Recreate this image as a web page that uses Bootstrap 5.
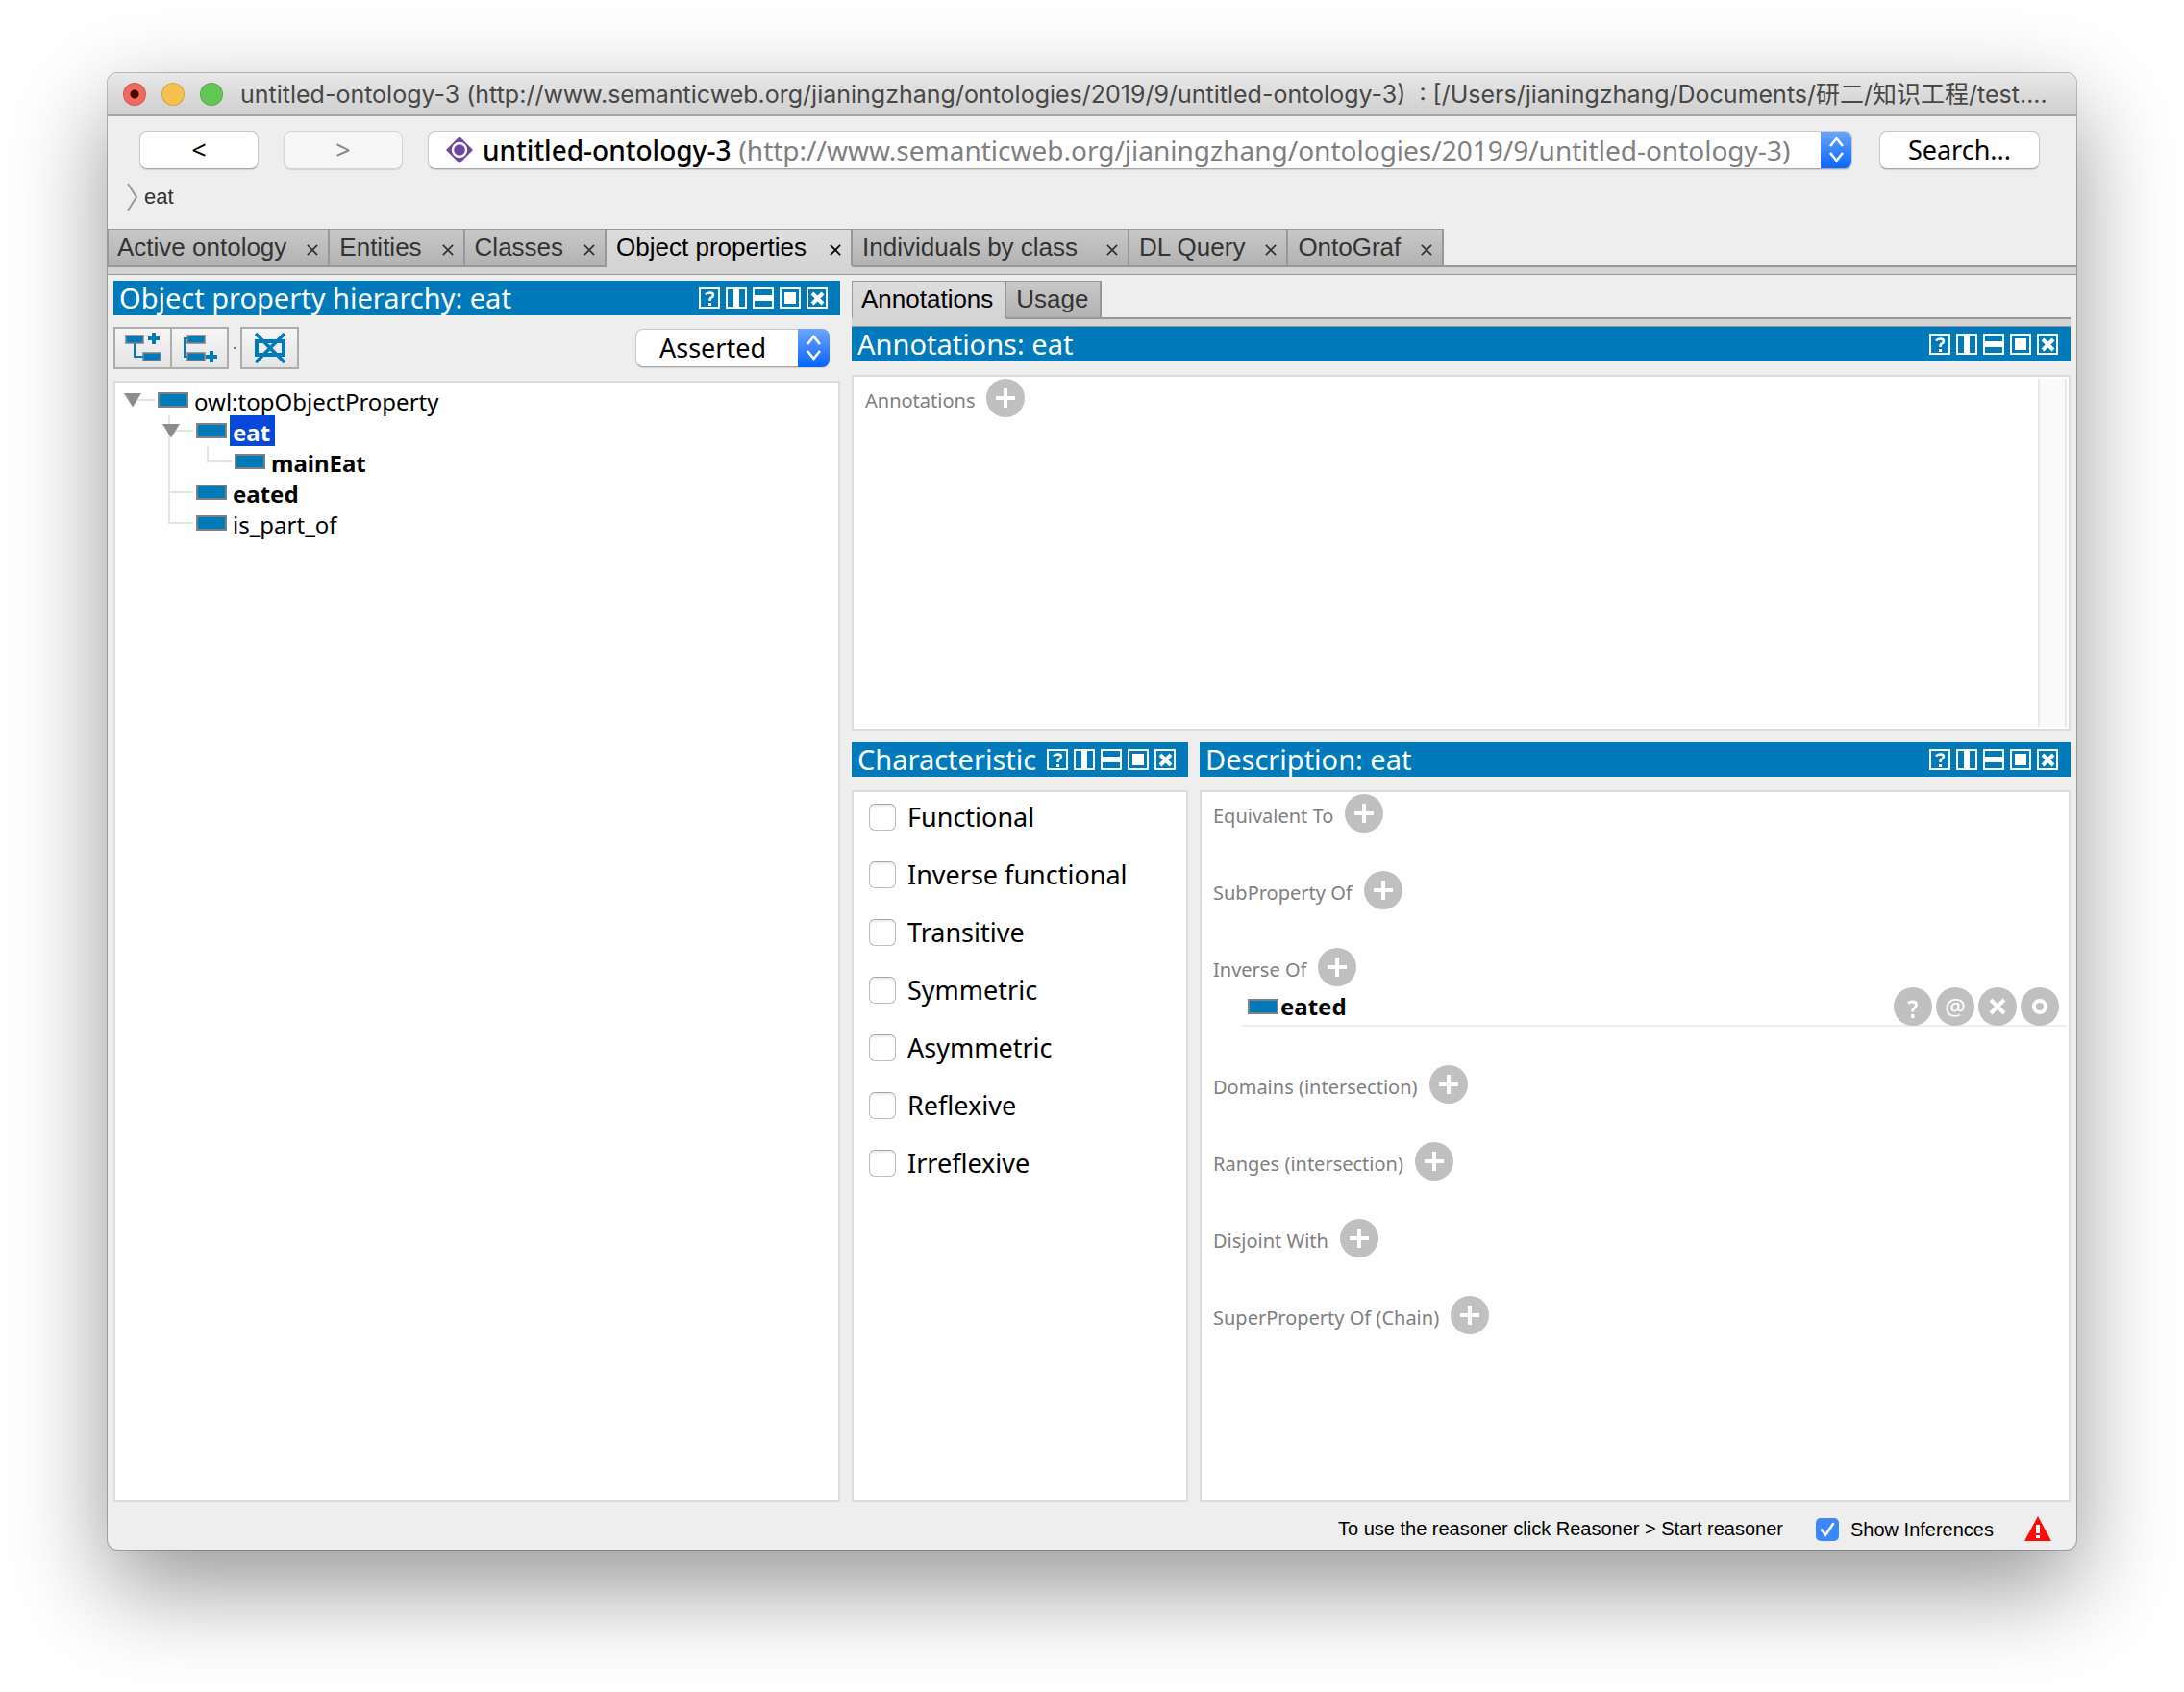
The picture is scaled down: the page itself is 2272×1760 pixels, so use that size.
<!DOCTYPE html>
<html lang="en">
<head>
<meta charset="utf-8">
<meta name="viewport" content="width=device-width, initial-scale=1">
<title>untitled-ontology-3</title>
<link href="https://cdn.jsdelivr.net/npm/bootstrap@5.3.0/dist/css/bootstrap.min.css" rel="stylesheet">
<style>
  :root { --blue: #007abb; --line: #dcdcdc; --edge: #989898; --face: #eeeeee; }
  body { min-height: 100vh; padding: 76px 112px 148px; background: #fff; color: #000;
    font-family: "Noto Sans", "Noto Sans CJK SC", sans-serif; font-size: 24px; line-height: 32px; }
  button, select { font-family: inherit; color: inherit; }
  svg { display: block; flex: none; }
  .helv { font-family: "Liberation Sans", sans-serif; }
  .app-window { min-height: calc(100vh - 224px); background: var(--face); border-radius: 10px;
    box-shadow: 0 0 0 1px rgba(0,0,0,.24), 0 38px 100px rgba(0,0,0,.42); }

  /* title bar */
  .titlebar { height: 45px; padding: 0 28px 0 16px; gap: 16px; border-radius: 10px 10px 0 0; border-bottom: 2px solid #a6a6a6;
    background: linear-gradient(#e8e8e8, #cfcfcf); }
  .light-btn { width: 24px; height: 24px; padding: 0; border-radius: 50%; border: 1px solid rgba(0,0,0,.14); }
  .light-red { background: radial-gradient(circle, #4a0500 0 4px, #ed6a5f 5px); }
  .light-amber { background: #f6c04f; }
  .light-green { background: #62c655; }
  .win-title { font-family: Inter, "Noto Sans CJK SC", sans-serif; font-size: 25px; font-weight: 400; line-height: 40px; color: #474747; margin: 0 0 0 2px; white-space: pre; }

  /* toolbar */
  .toolbar { padding: 15px 38px 0 33px; gap: 26px; }
  .mac-btn { height: 40px; padding: 0; font-size: 27px; line-height: 36px; background: #fff; border: 1px solid #c9c9c9; border-bottom-color: #a8a8a8;
    border-radius: 8px; box-shadow: 0 1px 1px rgba(0,0,0,.12); color: #000; }
  .mac-btn:disabled { background: #f6f6f6; color: #858585; border-color: #d4d4d4; opacity: 1; }
  .nav-btn { width: 124px; }
  .search-btn { width: 167px; margin-left: 2px; }
  .combo { overflow: hidden; padding-left: 18px; font-size: 28px; }
  .combo-arrow { width: 33px; align-self: stretch; margin: -1px; background: linear-gradient(#6ea6fb, #0564ff); border-radius: 0 8px 8px 0; }
  .combo b { font-weight: 500; margin-left: 10px; }
  .combo-url { color: #808080; margin-left: 8px; }
  .crumbs { padding: 15px 20px 19px; gap: 6px; font-size: 22px; line-height: 28px; color: #333; }
  .crumbs a { color: inherit; }

  /* tabs */
  .tab-strip { line-height: 37px; font-size: 26px; color: #333; }
  .tab-strip .fill { border-bottom: 2px solid var(--edge); }
  .tab-item { height: 40px; padding: 0 8px 0 10px; gap: 21px; border: 2px solid var(--edge); border-left-width: 0; border-top-width: 1px; background: linear-gradient(#c8c8c8, #b2b2b2); }
  .tab-item:first-child { border-left-width: 1px; padding-left: 9px; }
  .tab-item a { color: inherit; text-decoration: none; white-space: nowrap; }
  .tab-item.on { background: linear-gradient(#dddddd, #d4d4d4); color: #000; border-bottom-color: #d4d4d4; }
  .tab-item button { padding: 0; border: 0; background: none; width: 14px; }
  .tab-wide { min-width: 256px; }
  .tab-wider { min-width: 288px; }
  .tab-sub .tab-item { padding-right: 12px; }
  .tab-band { height: 8px; background: #d4d4d4; border-bottom: 1px solid var(--edge); }

  /* panes */
  .workspace { padding: 6px 6px 0; gap: 12px; }
  .pane-left { flex: 756 1 0; min-width: 0; }
  .pane-right { flex: 1268 1 0; min-width: 0; gap: 12px; }
  .pane-row { gap: 12px; }
  .pane-chars { flex: 350 1 0; min-width: 0; }
  .pane-desc { flex: 906 1 0; min-width: 0; }
  .pane-head { height: 36px; padding: 0 13px 0 6px; background: var(--blue); color: #fff; }
  .pane-head h2 { font-size: 29px; line-height: 36px; font-weight: 400; margin: 0; white-space: nowrap; }
  .head-tools { gap: 6px; }
  .head-tools button { padding: 0; border: 0; background: none; }
  .pane-body { background: #fff; border: 2px solid var(--line); }
  .pane-right .pane-body { margin-top: 14px; }
  .annot-body { height: 370px; }
  .scroll-track { width: 30px; margin: 2px 2px 2px 0; background: #fafafa; border: 2px solid #e9e9e9; border-width: 0 2px; }

  .tree-tools { padding: 12px 11px 12px 0; }
  .tool-btn { width: 61px; height: 44px; padding: 0; border: 2px solid #adadad; background: linear-gradient(#f6f6f6, #e4e4e4); display: grid; place-items: center; }
  .tool-btn + .tool-btn { margin-left: -2px; }
  .tool-dot { width: 2px; height: 2px; background: #777; margin: 0 5px; }
  .mode-box { width: 202px; position: relative; }
  .mode-box select { appearance: none; width: 100%; padding: 0 0 0 24px; outline: 0; }
  .mode-box .combo-arrow { position: absolute; top: 0; right: 0; bottom: 0; margin: 0; pointer-events: none; }

  .tree { margin: 0; padding: 2px 4px; list-style: none; }
  .tree li { height: 32px; }
  .tree .name { margin-left: 3px; padding: 2px 3px 0; height: 32px; }
  .tree .picked { background: #0648da; color: #fff; padding-right: 5px; }
  .prop { width: 32px; height: 16px; border: 2px solid #808080; background: var(--blue); flex: none; }
  .step { width: 40px; height: 32px; flex: none; }
  b.name, b.val { font-weight: 700; }

  .char-list { padding: 12px 16px; gap: 32px; }
  .char-list label { font-size: 27px; line-height: 28px; gap: 12px; }
  .tick { appearance: none; flex: none; margin: 0; width: 28px; height: 28px; border: 1px solid #bdbdbd; border-top-color: #a5a5a5; border-radius: 6px; background: #fff; box-shadow: inset 0 2px 2px rgba(0,0,0,.08); }

  .desc-list { padding: 2px 4px 2px 12px; gap: 40px; }
  .sect-row { gap: 12px; font-size: 20px; color: #808080; white-space: nowrap; }
  .sect-row span { padding-top: 6px; }
  .disc { width: 40px; height: 40px; padding: 0; border: 0; border-radius: 50%; background: #c0c0c0; color: #fff; display: grid; place-items: center; flex: none; }
  .axiom { height: 40px; margin: 2px -2px 0 30px; border-bottom: 2px solid #eeeeee; padding: 0 8px 0 6px; }
  .axiom .prop { margin-right: 2px; }
  .axiom-tools { gap: 4px; height: 40px; }

  .statusbar { height: 50px; padding: 6px 26px 0; font-size: 20px; line-height: 24px; }
  .statusbar label { gap: 12px; margin: 2px 32px 0 34px; }
  .tick-sm { width: 24px; height: 24px; border: 0; border-radius: 5px; appearance: none; margin: 0; }
  .tick-sm:checked { background: #3b87fd url("data:image/svg+xml,%3Csvg xmlns='http://www.w3.org/2000/svg' viewBox='0 0 24 24'%3E%3Cpath d='M6 12.5l4.200 5L18 6' fill='none' stroke='white' stroke-width='2.600' stroke-linecap='round'/%3E%3C/svg%3E"); }
</style>
<script src="https://cdn.jsdelivr.net/npm/bootstrap@5.3.0/dist/js/bootstrap.bundle.min.js" defer></script>
</head>
<body>
<svg width="0" height="0" class="position-absolute" aria-hidden="true">
  <symbol id="i-help" viewBox="0 0 22 22"><path d="M1 1h20v20H1z" fill="none" stroke="#fff" stroke-width="2"/><path d="M7 7.500Q8.500 5.500 11.500 5.500q3.500 0 3.500 2.500 0 1.500-2 2.500-1.500 1-1.500 2.500v1" fill="none" stroke="#fff" stroke-width="2.600"/><path d="M10 16h3v3h-3z" fill="#fff"/></symbol>
  <symbol id="i-vert" viewBox="0 0 22 22"><path d="M1 1h20v20H1z" fill="none" stroke="#fff" stroke-width="2"/><path d="M8 1h6v20H8z" fill="#fff"/></symbol>
  <symbol id="i-horz" viewBox="0 0 22 22"><path d="M1 1h20v20H1z" fill="none" stroke="#fff" stroke-width="2"/><path d="M1 8h20v6H1z" fill="#fff"/></symbol>
  <symbol id="i-full" viewBox="0 0 22 22"><path d="M1 1h20v20H1z" fill="none" stroke="#fff" stroke-width="2"/><path d="M5 5h12v12H5z" fill="#fff"/></symbol>
  <symbol id="i-shut" viewBox="0 0 22 22"><path d="M1 1h20v20H1z" fill="none" stroke="#fff" stroke-width="2"/><path d="M6 6l11 11M17 6L6 17" stroke="#fff" stroke-width="4"/></symbol>
  <symbol id="i-plus" viewBox="0 0 40 40"><path d="M20 10v20M10 20h20" stroke="#fff" stroke-width="4"/></symbol>
  <symbol id="i-updown" viewBox="0 0 33 40"><path d="M10 16l6.500-8 6.500 8M10 23l6.500 8 6.500-8" fill="none" stroke="#fff" stroke-width="2.600"/></symbol>
  <symbol id="i-cross" viewBox="0 0 14 14"><path d="M1 1l12 12M13 1L1 13" stroke="currentColor" stroke-width="2"/></symbol>
  <symbol id="t-tri" viewBox="0 0 40 32"><path d="M18 16h19" stroke="#e4e4e4" stroke-width="2"/><path d="M5 9h18l-9 14.500z" fill="#8c8c8c"/></symbol>
  <symbol id="t-bar" viewBox="0 0 40 32"><path d="M12 0v32" stroke="#e4e4e4" stroke-width="2"/></symbol>
  <symbol id="t-tee" viewBox="0 0 40 32"><path d="M12 0v32M12 16h25" stroke="#e4e4e4" stroke-width="2"/></symbol>
  <symbol id="t-end" viewBox="0 0 40 32"><path d="M12 0v16h25" fill="none" stroke="#e4e4e4" stroke-width="2"/></symbol>
</svg>

<main class="app-window d-flex flex-column">
  <header class="titlebar d-flex align-items-center">
    <button class="light-btn light-red flex-shrink-0" aria-label="Close"></button>
    <button class="light-btn light-amber flex-shrink-0" aria-label="Minimise"></button>
    <button class="light-btn light-green flex-shrink-0" aria-label="Zoom"></button>
    <h1 class="win-title">untitled-ontology-3 (http://www.semanticweb.org/jianingzhang/ontologies/2019/9/untitled-ontology-3)  : [/Users/jianingzhang/Documents/研二/知识工程/test....</h1>
  </header>

  <div class="toolbar d-flex align-items-center">
    <button class="mac-btn nav-btn" aria-label="Back">&lt;</button>
    <button class="mac-btn nav-btn" aria-label="Forward" disabled>&gt;</button>
    <button class="mac-btn combo flex-grow-1 d-flex align-items-center text-nowrap" aria-haspopup="listbox">
      <svg width="28" height="28" viewBox="0 0 28 28"><path d="M14 0l14 14-14 14L0 14z" fill="#6d46a3"/><circle cx="14" cy="14" r="7" fill="#6d46a3" stroke="#fff" stroke-width="2.400"/><circle cx="14" cy="14" r="4" fill="#6d46a3"/></svg>
      <b>untitled-ontology-3</b><span class="combo-url">(http://www.semanticweb.org/jianingzhang/ontologies/2019/9/untitled-ontology-3)</span>
      <span class="combo-arrow ms-auto"><svg width="33" height="40"><use href="#i-updown"/></svg></span>
    </button>
    <button class="mac-btn search-btn">Search...</button>
  </div>

  <nav class="crumbs helv d-flex align-items-center" aria-label="Breadcrumb">
    <svg width="12" height="28" viewBox="0 0 12 28"><path d="M1 0l9 14-9 14" fill="none" stroke="#999" stroke-width="2"/></svg>
    <a href="#" class="text-decoration-none">eat</a>
  </nav>

  <nav class="tab-strip helv d-flex" aria-label="Views">
    <div class="tab-item d-flex"><a href="#">Active ontology</a><button aria-label="Close tab"><svg width="12" height="12" class="mt-1"><use href="#i-cross"/></svg></button></div>
    <div class="tab-item d-flex"><a href="#">Entities</a><button aria-label="Close tab"><svg width="12" height="12" class="mt-1"><use href="#i-cross"/></svg></button></div>
    <div class="tab-item d-flex"><a href="#">Classes</a><button aria-label="Close tab"><svg width="12" height="12" class="mt-1"><use href="#i-cross"/></svg></button></div>
    <div class="tab-item tab-wide on d-flex justify-content-between"><a href="#" aria-current="page">Object properties</a><button aria-label="Close tab"><svg width="12" height="12" class="mt-1"><use href="#i-cross"/></svg></button></div>
    <div class="tab-item tab-wider d-flex justify-content-between"><a href="#">Individuals by class</a><button aria-label="Close tab"><svg width="12" height="12" class="mt-1"><use href="#i-cross"/></svg></button></div>
    <div class="tab-item d-flex"><a href="#">DL Query</a><button aria-label="Close tab"><svg width="12" height="12" class="mt-1"><use href="#i-cross"/></svg></button></div>
    <div class="tab-item d-flex"><a href="#">OntoGraf</a><button aria-label="Close tab"><svg width="12" height="12" class="mt-1"><use href="#i-cross"/></svg></button></div>
    <div class="fill flex-grow-1"></div>
  </nav>
  <div class="tab-band"></div>

  <div class="workspace d-flex flex-grow-1">
    <section class="pane-left d-flex flex-column">
      <div class="pane-head d-flex align-items-center justify-content-between">
        <h2>Object property hierarchy: eat</h2>
        <div class="head-tools d-flex">
          <button aria-label="Help"><svg width="22" height="22"><use href="#i-help"/></svg></button>
          <button aria-label="Split vertically"><svg width="22" height="22"><use href="#i-vert"/></svg></button>
          <button aria-label="Split horizontally"><svg width="22" height="22"><use href="#i-horz"/></svg></button>
          <button aria-label="Float"><svg width="22" height="22"><use href="#i-full"/></svg></button>
          <button aria-label="Close"><svg width="22" height="22"><use href="#i-shut"/></svg></button>
        </div>
      </div>
      <div class="tree-tools d-flex align-items-center">
        <button class="tool-btn" aria-label="Add sub property"><svg width="40" height="32" viewBox="0 0 40 32"><path d="M11 11v14h9" fill="none" stroke="#007abb" stroke-width="2"/><path d="M2 3h18v8H2zM20 21h18v8H20z" fill="#007abb" stroke="#808080" stroke-width="1.500"/><path d="M31 0v12M25 6h12" stroke="#007abb" stroke-width="4"/></svg></button>
        <button class="tool-btn" aria-label="Add sibling property"><svg width="40" height="32" viewBox="0 0 40 32"><path d="M8 6H4v19h4" fill="none" stroke="#007abb" stroke-width="2"/><path d="M7 3h18v8H7zM7 21h18v8H7z" fill="#007abb" stroke="#808080" stroke-width="1.500"/><path d="M32 19v12M26 25h12" stroke="#007abb" stroke-width="4"/></svg></button>
        <span class="tool-dot"></span>
        <button class="tool-btn" aria-label="Delete property"><svg width="36" height="34" viewBox="0 0 36 34"><path d="M4 10h28v14H4z" fill="none" stroke="#007abb" stroke-width="4"/><path d="M3 2l30 30M33 2L3 32" stroke="#007abb" stroke-width="3.600"/></svg></button>
        <div class="mode-box ms-auto">
          <select class="mac-btn" aria-label="Hierarchy mode"><option>Asserted</option><option>Inferred</option></select>
          <span class="combo-arrow"><svg width="33" height="40"><use href="#i-updown"/></svg></span>
        </div>
      </div>
      <div class="pane-body flex-grow-1">
        <ul class="tree">
          <li class="d-flex align-items-center"><svg class="step"><use href="#t-tri"/></svg><span class="prop"></span><span class="name">owl:topObjectProperty</span></li>
          <li class="d-flex align-items-center"><span class="step"></span><svg class="step"><use href="#t-bar"/><use href="#t-tri"/></svg><span class="prop"></span><b class="name picked">eat</b></li>
          <li class="d-flex align-items-center"><span class="step"></span><svg class="step"><use href="#t-bar"/></svg><svg class="step"><use href="#t-end"/></svg><span class="prop"></span><b class="name">mainEat</b></li>
          <li class="d-flex align-items-center"><span class="step"></span><svg class="step"><use href="#t-tee"/></svg><span class="prop"></span><b class="name">eated</b></li>
          <li class="d-flex align-items-center"><span class="step"></span><svg class="step"><use href="#t-end"/></svg><span class="prop"></span><span class="name">is_part_of</span></li>
        </ul>
      </div>
    </section>

    <div class="pane-right d-flex flex-column">
      <section>
        <nav class="tab-strip tab-sub helv d-flex" aria-label="Annotation views">
          <div class="tab-item on"><a href="#" aria-current="page">Annotations</a></div>
          <div class="tab-item"><a href="#">Usage</a></div>
          <div class="fill flex-grow-1"></div>
        </nav>
        <div class="tab-band"></div>
        <div class="pane-head d-flex align-items-center justify-content-between">
          <h2>Annotations: eat</h2>
          <div class="head-tools d-flex">
            <button aria-label="Help"><svg width="22" height="22"><use href="#i-help"/></svg></button>
            <button aria-label="Split vertically"><svg width="22" height="22"><use href="#i-vert"/></svg></button>
            <button aria-label="Split horizontally"><svg width="22" height="22"><use href="#i-horz"/></svg></button>
            <button aria-label="Float"><svg width="22" height="22"><use href="#i-full"/></svg></button>
            <button aria-label="Close"><svg width="22" height="22"><use href="#i-shut"/></svg></button>
          </div>
        </div>
        <div class="pane-body annot-body d-flex justify-content-between">
          <div class="desc-list"><div class="sect-row d-flex align-items-center"><span>Annotations</span><button class="disc" aria-label="Add annotation"><svg width="40" height="40"><use href="#i-plus"/></svg></button></div></div>
          <div class="scroll-track"></div>
        </div>
      </section>

      <div class="pane-row d-flex flex-grow-1">
        <section class="pane-chars d-flex flex-column">
          <div class="pane-head d-flex align-items-center justify-content-between">
            <h2>Characteristic</h2>
            <div class="head-tools d-flex">
              <button aria-label="Help"><svg width="22" height="22"><use href="#i-help"/></svg></button>
              <button aria-label="Split vertically"><svg width="22" height="22"><use href="#i-vert"/></svg></button>
              <button aria-label="Split horizontally"><svg width="22" height="22"><use href="#i-horz"/></svg></button>
              <button aria-label="Float"><svg width="22" height="22"><use href="#i-full"/></svg></button>
              <button aria-label="Close"><svg width="22" height="22"><use href="#i-shut"/></svg></button>
            </div>
          </div>
          <div class="pane-body flex-grow-1">
            <div class="char-list d-flex flex-column">
              <label class="d-flex align-items-center"><input type="checkbox" class="tick">Functional</label>
              <label class="d-flex align-items-center"><input type="checkbox" class="tick">Inverse functional</label>
              <label class="d-flex align-items-center"><input type="checkbox" class="tick">Transitive</label>
              <label class="d-flex align-items-center"><input type="checkbox" class="tick">Symmetric</label>
              <label class="d-flex align-items-center"><input type="checkbox" class="tick">Asymmetric</label>
              <label class="d-flex align-items-center"><input type="checkbox" class="tick">Reflexive</label>
              <label class="d-flex align-items-center"><input type="checkbox" class="tick">Irreflexive</label>
            </div>
          </div>
        </section>

        <section class="pane-desc d-flex flex-column">
          <div class="pane-head d-flex align-items-center justify-content-between">
            <h2>Description: eat</h2>
            <div class="head-tools d-flex">
              <button aria-label="Help"><svg width="22" height="22"><use href="#i-help"/></svg></button>
              <button aria-label="Split vertically"><svg width="22" height="22"><use href="#i-vert"/></svg></button>
              <button aria-label="Split horizontally"><svg width="22" height="22"><use href="#i-horz"/></svg></button>
              <button aria-label="Float"><svg width="22" height="22"><use href="#i-full"/></svg></button>
              <button aria-label="Close"><svg width="22" height="22"><use href="#i-shut"/></svg></button>
            </div>
          </div>
          <div class="pane-body flex-grow-1">
            <div class="desc-list d-flex flex-column">
              <div class="sect-row d-flex align-items-center"><span>Equivalent To</span><button class="disc" aria-label="Add"><svg width="40" height="40"><use href="#i-plus"/></svg></button></div>
              <div class="sect-row d-flex align-items-center"><span>SubProperty Of</span><button class="disc" aria-label="Add"><svg width="40" height="40"><use href="#i-plus"/></svg></button></div>
              <div>
                <div class="sect-row d-flex align-items-center"><span>Inverse Of</span><button class="disc" aria-label="Add"><svg width="40" height="40"><use href="#i-plus"/></svg></button></div>
                <div class="axiom d-flex align-items-center">
                  <span class="prop"></span><b class="val">eated</b>
                  <div class="axiom-tools d-flex ms-auto">
                    <button class="disc" aria-label="Explain"><svg width="40" height="40" viewBox="0 0 40 40"><path d="M15 16.500q2-1.500 4.500-1.500 4 0 4 3 0 2-2 3.500-2 1.500-2 4" fill="none" stroke="#fff" stroke-width="2.800"/><path d="M18 28h3.500v4H18z" fill="#fff"/></svg></button>
                    <button class="disc" aria-label="Annotate">@</button>
                    <button class="disc" aria-label="Remove"><svg width="40" height="40" viewBox="0 0 40 40"><path d="M13 13l14 14M27 13L13 27" stroke="#fff" stroke-width="4"/></svg></button>
                    <button class="disc" aria-label="Edit"><svg width="40" height="40" viewBox="0 0 40 40"><circle cx="20" cy="20" r="6" fill="none" stroke="#fff" stroke-width="4"/></svg></button>
                  </div>
                </div>
              </div>
              <div class="sect-row d-flex align-items-center"><span>Domains (intersection)</span><button class="disc" aria-label="Add"><svg width="40" height="40"><use href="#i-plus"/></svg></button></div>
              <div class="sect-row d-flex align-items-center"><span>Ranges (intersection)</span><button class="disc" aria-label="Add"><svg width="40" height="40"><use href="#i-plus"/></svg></button></div>
              <div class="sect-row d-flex align-items-center"><span>Disjoint With</span><button class="disc" aria-label="Add"><svg width="40" height="40"><use href="#i-plus"/></svg></button></div>
              <div class="sect-row d-flex align-items-center"><span>SuperProperty Of (Chain)</span><button class="disc" aria-label="Add"><svg width="40" height="40"><use href="#i-plus"/></svg></button></div>
            </div>
          </div>
        </section>
      </div>
    </div>
  </div>

  <footer class="statusbar helv d-flex justify-content-end align-items-center">
    <span>To use the reasoner click Reasoner &gt; Start reasoner</span>
    <label class="d-flex align-items-center"><input type="checkbox" class="tick-sm" checked>Show Inferences</label>
    <svg width="28" height="26" viewBox="0 0 28 26"><path d="M14 0l14 26H0z" fill="#fb0d0d"/><path d="M12 9h4v9h-4zM12 20h4v3h-4z" fill="#fff"/></svg>
  </footer>
</main>
</body>
</html>
